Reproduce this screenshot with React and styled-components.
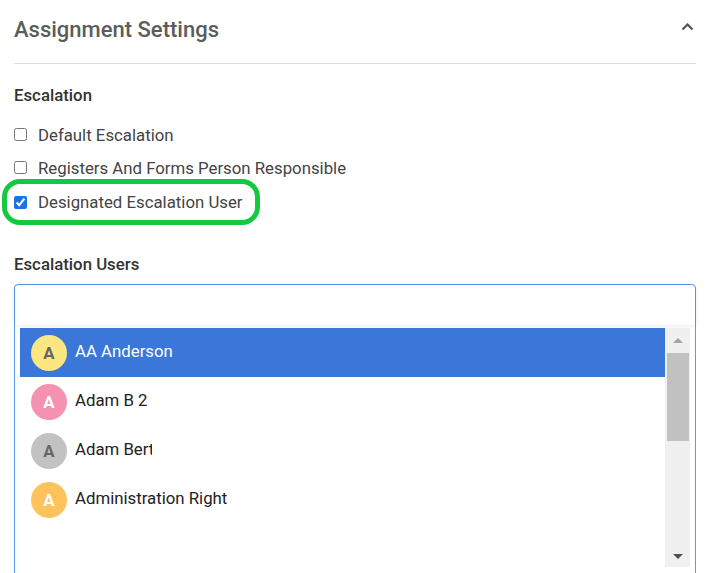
import React from 'react'
import styled, { createGlobalStyle } from 'styled-components'

const GlobalStyle = createGlobalStyle`
   * { box-sizing: border-box; }
   body {
      margin: 0;
      background: #fff;
      font-family: Roboto, "Liberation Sans", Arial, sans-serif;
   }
`

const users = [
   { name: 'AA Anderson', bg: '#fbe680', fg: '#666', active: true },
   { name: 'Adam B 2', bg: '#f592b1', fg: '#fff' },
   { name: 'Adam Bert', bg: '#c2c2c2', fg: '#666', clip: 77 },
   { name: 'Administration Right', bg: '#ffc25c', fg: '#fff' },
]

const options = [
   { label: 'Default Escalation', checked: false },
   { label: 'Registers And Forms Person Responsible', checked: false },
   { label: 'Designated Escalation User', checked: true, highlight: true },
]

const App = () => {
   return (
      <Page>
         <GlobalStyle />
         <Header>
            <Title>Assignment Settings</Title>
            <svg width="13" height="8" viewBox="0 0 13 8">
               <path d="M1.5 6.5 L6.5 1.5 L11.5 6.5" fill="none" stroke="#555" strokeWidth="2.2" />
            </svg>
         </Header>

         <SectionLabel>Escalation</SectionLabel>
         <Options>
            {options.map((o, i) => (
               <Option key={i} highlight={o.highlight}>
                  <input type="checkbox" defaultChecked={o.checked} />
                  <span>{o.label}</span>
               </Option>
            ))}
         </Options>

         <SectionLabel className="users">Escalation Users</SectionLabel>
         <SelectBox>
            <Control />
            <Menu>
               <List>
                  {users.map((u, i) => (
                     <Row key={i} active={u.active}>
                        <Avatar bg={u.bg} fg={u.fg}>A</Avatar>
                        <Name style={u.clip ? { maxWidth: u.clip } : undefined}>{u.name}</Name>
                     </Row>
                  ))}
               </List>
               <Scrollbar>
                  <Arrow up />
                  <Thumb />
                  <div className="fill" />
                  <Arrow />
               </Scrollbar>
            </Menu>
         </SelectBox>
      </Page>
   )
}

const Page = styled.div`
   padding: 0 18px 0 14px;
   width: 714px;
   height: 573px;
   overflow: hidden;
`

const Header = styled.div`
   display: flex;
   align-items: center;
   justify-content: space-between;
   padding: 18px 1px 21px 0;
   border-bottom: 1px solid #dcdcdc;
   svg {
      margin-top: -6px;
      margin-right: 1px;
   }
`

const Title = styled.h2`
   margin: 0;
   font-size: 22px;
   line-height: 24px;
   font-weight: 500;
   color: #5c5c5c;
`

const SectionLabel = styled.div`
   margin-top: 22px;
   font-size: 16.8px;
   line-height: 19px;
   font-weight: 500;
   color: #333;
   &.users {
      margin-top: 43px;
   }
`

const Options = styled.div`
   display: flex;
   flex-direction: column;
   align-items: flex-start;
   gap: 14px;
   margin-top: 20px;
`

const Option = styled.label`
   display: flex;
   align-items: center;
   gap: 11px;
   height: 19px;
   font-size: 16.8px;
   color: #444;
   input {
      width: 13px;
      height: 13px;
      margin: 0;
      accent-color: #1a73e8;
   }
   ${({ highlight }) => highlight && `
      height: 46px;
      margin: -12px 0 -13px -12px;
      padding: 0 12px 0 7px;
      border: 5px solid #14c93f;
      border-radius: 18px;
   `}
`

const SelectBox = styled.div`
   margin-top: 10px;
   height: 300px;
   border: 1px solid #5b9cf0;
   border-radius: 4px;
   padding: 0 5px;
`

const Control = styled.div`
   height: 40px;
   margin: 0 -5px;
   border-radius: 4px 4px 0 0;
   box-shadow: 0 0 5px rgba(0, 0, 0, 0.12);
`

const Menu = styled.div`
   display: flex;
   height: 239px;
   margin-top: 3px;
`

const List = styled.div`
   flex: 1;
`

const Row = styled.div`
   display: flex;
   align-items: center;
   gap: 8px;
   height: 49px;
   padding-left: 11px;
   font-size: 16.8px;
   background: ${({ active }) => (active ? '#3a77d8' : '#fff')};
   color: ${({ active }) => (active ? '#fff' : '#222')};
`

const Avatar = styled.div`
   display: flex;
   align-items: center;
   justify-content: center;
   flex-shrink: 0;
   width: 36px;
   height: 36px;
   border-radius: 50%;
   background: ${({ bg }) => bg};
   color: ${({ fg }) => fg};
   font-size: 16.8px;
   font-weight: 700;
`

const Name = styled.span`
   white-space: nowrap;
   overflow: hidden;
   margin-top: -4px;
   line-height: 22px;
`

const Scrollbar = styled.div`
   display: flex;
   flex-direction: column;
   align-items: center;
   width: 25px;
   background: #f0f0f0;
   padding: 10px 1px 8px 2px;
   .fill {
      flex: 1;
   }
`

const Arrow = styled.div`
   width: 0;
   height: 0;
   border-left: 5px solid transparent;
   border-right: 5px solid transparent;
   ${({ up }) => up
      ? 'border-bottom: 5px solid #a3a3a3; margin-bottom: 10px;'
      : 'border-top: 5px solid #505050;'}
`

const Thumb = styled.div`
   align-self: stretch;
   height: 88px;
   background: #c1c1c1;
`

export default App
